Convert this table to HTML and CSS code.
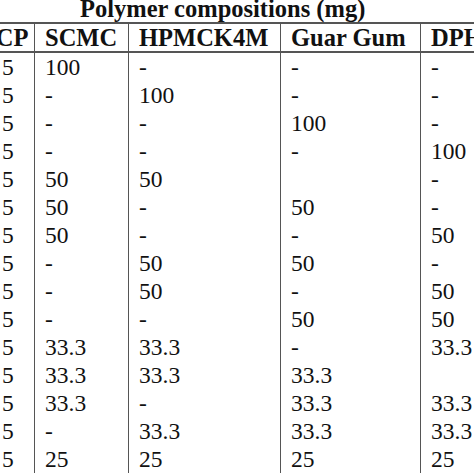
FILE: index.html
```html
<!DOCTYPE html>
<html lang="en">
<head>
<meta charset="utf-8">
<title>Polymer compositions</title>
<link rel="stylesheet" href="styles.css">
</head>
<body>
<table class="comp">
  <caption class="title">Polymer compositions (mg)</caption>
  <colgroup>
    <col class="w1"><col class="w2"><col class="w3"><col class="w4"><col class="w5">
  </colgroup>
  <thead>
    <tr><th>DCP</th><th>SCMC</th><th>HPMCK4M</th><th>Guar Gum</th><th>DPH</th></tr>
  </thead>
  <tbody>
    <tr><td class="first">5</td><td>100</td><td>-</td><td>-</td><td>-</td></tr>
    <tr><td class="first">5</td><td>-</td><td>100</td><td>-</td><td>-</td></tr>
    <tr><td class="first">5</td><td>-</td><td>-</td><td>100</td><td>-</td></tr>
    <tr><td class="first">5</td><td>-</td><td>-</td><td>-</td><td>100</td></tr>
    <tr><td class="first">5</td><td>50</td><td>50</td><td></td><td>-</td></tr>
    <tr><td class="first">5</td><td>50</td><td>-</td><td>50</td><td>-</td></tr>
    <tr><td class="first">5</td><td>50</td><td>-</td><td>-</td><td>50</td></tr>
    <tr><td class="first">5</td><td>-</td><td>50</td><td>50</td><td>-</td></tr>
    <tr><td class="first">5</td><td>-</td><td>50</td><td>-</td><td>50</td></tr>
    <tr><td class="first">5</td><td>-</td><td>-</td><td>50</td><td>50</td></tr>
    <tr><td class="first">5</td><td>33.3</td><td>33.3</td><td>-</td><td>33.3</td></tr>
    <tr><td class="first">5</td><td>33.3</td><td>33.3</td><td>33.3</td><td></td></tr>
    <tr><td class="first">5</td><td>33.3</td><td>-</td><td>33.3</td><td>33.3</td></tr>
    <tr><td class="first">5</td><td>-</td><td>33.3</td><td>33.3</td><td>33.3</td></tr>
    <tr><td class="first">5</td><td>25</td><td>25</td><td>25</td><td>25</td></tr>
  </tbody>
</table>
</body>
</html>
```

FILE: styles.css
```css
html, body {
  margin: 0;
  padding: 0;
  background: #ffffff;
  overflow: hidden;
}

body {
  width: 474px;
  height: 474px;
  font-family: "Liberation Serif", "Times New Roman", serif;
  color: #111111;
}

.comp {
  margin-top: -3px;
  margin-left: -32px;
  border-collapse: separate;
  border-spacing: 0;
  table-layout: fixed;
  width: 552px;
}

.w1 { width: 66px; }
.w2 { width: 94px; }
.w3 { width: 152px; }
.w4 { width: 140px; }
.w5 { width: 100px; }

.title {
  caption-side: top;
  text-align: left;
  font-weight: bold;
  font-size: 24.5px;
  line-height: 24px;
  padding: 0 0 1px 112px;
  white-space: nowrap;
}

.comp th {
  font-weight: bold;
  font-size: 24.5px;
  line-height: 24px;
  text-align: left;
  white-space: nowrap;
  padding: 2px 10px 1px 10px;
  border-top: 2px solid #555555;
  border-bottom: 2px solid #555555;
}

.comp td {
  font-size: 23.5px;
  line-height: 28px;
  height: 28px;
  padding: 0 10px;
  text-align: left;
  white-space: nowrap;
  vertical-align: top;
}

.comp th + th,
.comp td + td {
  border-left: 1px solid #555555;
}

.comp td.first {
  padding-left: 34px;
}
```
